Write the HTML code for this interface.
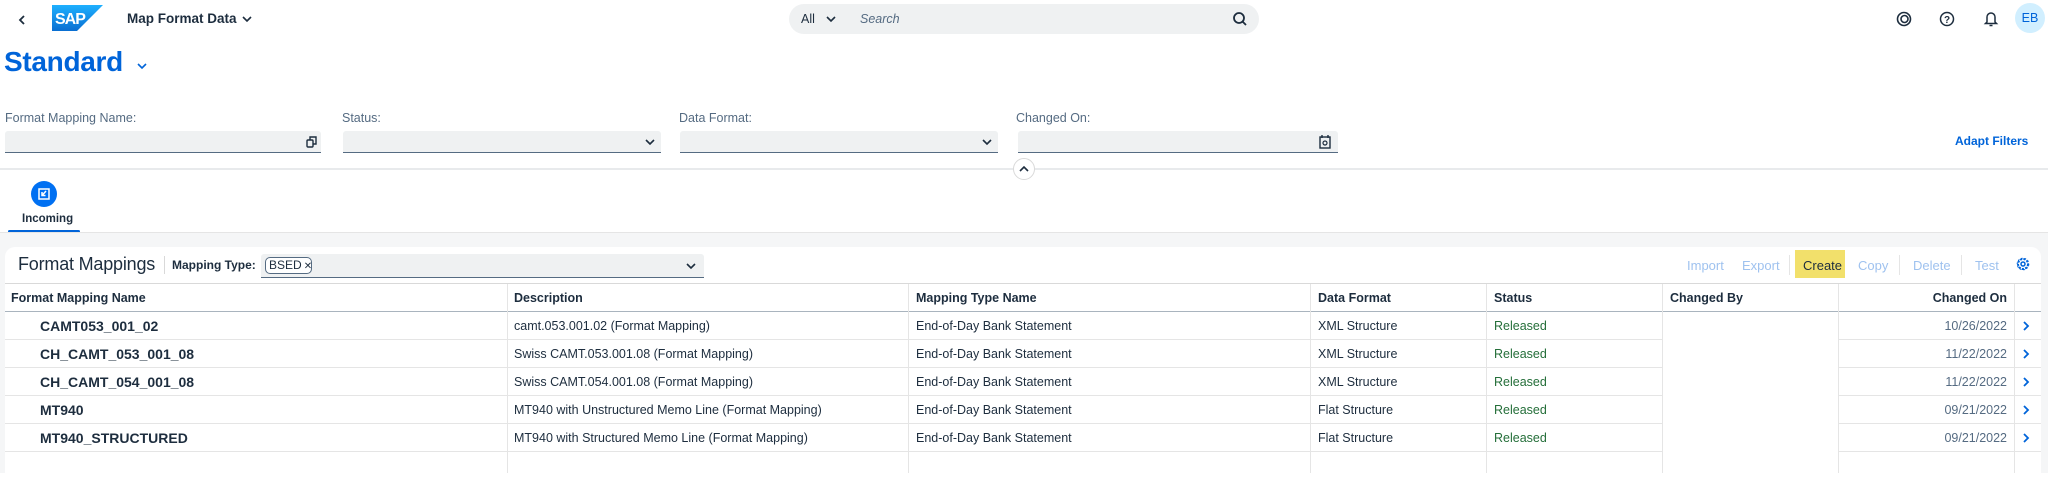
<!DOCTYPE html>
<html><head><meta charset="utf-8"><style>
*{box-sizing:border-box;margin:0;padding:0}
body{width:2048px;height:473px;overflow:hidden;background:#fff;font-family:"Liberation Sans",sans-serif;color:#1d2d3e;position:relative}
.a{position:absolute;white-space:nowrap}
.lbl{font-size:12.5px;color:#556b82}
.inp{position:absolute;height:22px;background:#eff1f2;border-bottom:1px solid #556b82;border-radius:3px 3px 0 0}
.hd{font-size:12.5px;font-weight:bold;color:#1d2d3e}
.c{font-size:12.5px;color:#1d2d3e}
.nm{font-size:14px;font-weight:bold;color:#1d2d3e}
.rel{font-size:12.5px;color:#256f3a}
.hl{position:absolute;height:1px;background:#e5e5e5}
.vl{position:absolute;width:1px;background:#e5e5e5}
.tb{font-size:13px;color:#9fc2ef}
</style></head><body>
<svg class="a" style="left:17px;top:14px" width="10" height="12" viewBox="0 0 10 12"><path d="M7 2 L3 6 L7 10" stroke="#1d2d3e" stroke-width="1.8" fill="none"/></svg>
<svg class="a" style="left:52px;top:5px" width="51" height="26" viewBox="0 0 51 26"><defs><linearGradient id="g" x1="0" y1="0" x2="0" y2="1"><stop offset="0" stop-color="#1eb0ff"/><stop offset="1" stop-color="#0a6ed1"/></linearGradient></defs><path d="M0 0H51L25 26H0Z" fill="url(#g)"/><text x="3" y="19" font-family="Liberation Sans" font-weight="bold" font-size="16" fill="#fff" letter-spacing="-1">SAP</text></svg>
<div class="a" style="left:127px;top:11px;font-size:13.5px;font-weight:bold;color:#1d2d3e">Map Format Data</div>
<svg class="a" style="left:242px;top:15px" width="10" height="8"><path d="M1 2 L5 6 L9 2" stroke="#1d2d3e" stroke-width="1.6" fill="none"/></svg>
<div class="a" style="left:789px;top:4px;width:470px;height:30px;border-radius:15px;background:#eff1f2"></div>
<div class="a" style="left:801px;top:12px;font-size:12.5px;color:#1d2d3e">All</div>
<svg class="a" style="left:826px;top:15px" width="10" height="8"><path d="M1 2 L5 6 L9 2" stroke="#1d2d3e" stroke-width="1.6" fill="none"/></svg>
<div class="a" style="left:860px;top:12px;font-size:12.5px;font-style:italic;color:#556b82">Search</div>
<svg class="a" style="left:1232px;top:11px" width="16" height="16"><circle cx="7" cy="7" r="5" stroke="#1d2d3e" stroke-width="1.8" fill="none"/><path d="M10.5 10.5 L14 14" stroke="#1d2d3e" stroke-width="1.8"/></svg>
<svg class="a" style="left:1896px;top:11px" width="16" height="16"><circle cx="8" cy="8" r="6.5" stroke="#1d2d3e" stroke-width="1.6" fill="none"/><circle cx="8.5" cy="8" r="3.5" stroke="#1d2d3e" stroke-width="1.6" fill="none"/></svg>
<svg class="a" style="left:1939px;top:11px" width="16" height="16"><circle cx="8" cy="8" r="6.5" stroke="#1d2d3e" stroke-width="1.5" fill="none"/><text x="8" y="12" text-anchor="middle" font-family="Liberation Sans" font-weight="bold" font-size="10" fill="#1d2d3e">?</text></svg>
<svg class="a" style="left:1983px;top:10px" width="16" height="18"><path d="M4 12 V7 a4 4 0 0 1 8 0 V12 L13.5 13.5 H2.5 Z" stroke="#1d2d3e" stroke-width="1.5" fill="none"/><path d="M6.5 15.5 H9.5" stroke="#1d2d3e" stroke-width="1.5"/></svg>
<div class="a" style="left:2015px;top:3px;width:30px;height:30px;border-radius:50%;background:#d1efff;color:#0064d9;font-size:12.5px;text-align:center;line-height:30px">EB</div>
<div class="a" style="left:4px;top:46px;font-size:28px;font-weight:bold;color:#0064d9;letter-spacing:-0.3px">Standard</div>
<svg class="a" style="left:137px;top:62px" width="10" height="8"><path d="M1 2 L5 6 L9 2" stroke="#0064d9" stroke-width="1.6" fill="none"/></svg>
<div class="a lbl" style="left:5px;top:111px">Format Mapping Name:</div>
<div class="a lbl" style="left:342px;top:111px">Status:</div>
<div class="a lbl" style="left:679px;top:111px">Data Format:</div>
<div class="a lbl" style="left:1016px;top:111px">Changed On:</div>
<div class="inp" style="left:5px;top:131px;width:316px"></div>
<div class="inp" style="left:343px;top:131px;width:318px"></div>
<div class="inp" style="left:680px;top:131px;width:318px"></div>
<div class="inp" style="left:1018px;top:131px;width:320px"></div>
<svg class="a" style="left:305px;top:135px" width="14" height="14"><rect x="2" y="5" width="6" height="7" rx="1" stroke="#1d2d3e" stroke-width="1.4" fill="none"/><path d="M5 5 V2 H11 V9 H8" stroke="#1d2d3e" stroke-width="1.4" fill="none"/></svg>
<svg class="a" style="left:645px;top:138px" width="10" height="8"><path d="M1 2 L5 6 L9 2" stroke="#1d2d3e" stroke-width="1.6" fill="none"/></svg>
<svg class="a" style="left:982px;top:138px" width="10" height="8"><path d="M1 2 L5 6 L9 2" stroke="#1d2d3e" stroke-width="1.6" fill="none"/></svg>
<svg class="a" style="left:1318px;top:134px" width="14" height="16"><rect x="2" y="3" width="10" height="11" stroke="#1d2d3e" stroke-width="1.4" fill="none"/><path d="M4 1 V4 M10 1 V4" stroke="#1d2d3e" stroke-width="1.4"/><circle cx="7" cy="9" r="2" stroke="#1d2d3e" stroke-width="1.2" fill="none"/></svg>
<div class="a" style="left:1955px;top:134px;font-size:12px;font-weight:bold;color:#0064d9">Adapt Filters</div>
<div class="a" style="left:0;top:168px;width:2048px;height:2px;background:#e8eaec"></div>
<div class="a" style="left:1013px;top:158px;width:22px;height:22px;border-radius:50%;background:#fff;border:1px solid #d9d9d9"></div>
<svg class="a" style="left:1019px;top:165px" width="10" height="8"><path d="M1 6 L5 2 L9 6" stroke="#1d2d3e" stroke-width="1.6" fill="none"/></svg>
<div class="a" style="left:31px;top:181px;width:26px;height:26px;border-radius:50%;background:#0070f2"></div>
<svg class="a" style="left:37px;top:187px" width="14" height="14"><rect x="2" y="2" width="10" height="10" stroke="#fff" stroke-width="1.5" fill="none"/><path d="M9 4 L5.5 8 M5 5 V8.5 H8.5" stroke="#fff" stroke-width="1.5" fill="none"/></svg>
<div class="a" style="left:22px;top:213px;font-size:11.5px;font-weight:bold;color:#1d2d3e">Incoming</div>
<div class="a" style="left:8px;top:230px;width:72px;height:3px;background:#0064d9;border-radius:2px"></div>
<div class="a" style="left:0;top:232px;width:2048px;height:241px;background:#f5f6f7;border-top:1px solid #e5e5e5"></div>
<div class="a" style="left:5px;top:247px;width:2036px;height:230px;background:#fff;border-radius:10px 10px 0 0"></div>
<div class="a" style="left:18px;top:254px;font-size:18px;color:#1d2d3e;letter-spacing:-0.2px">Format Mappings</div>
<div class="vl" style="left:164px;top:256px;height:18px;background:#d9d9d9"></div>
<div class="a" style="left:172px;top:258px;font-size:12px;font-weight:bold;color:#1d2d3e">Mapping Type:</div>
<div class="inp" style="left:261px;top:254px;width:443px;height:24px"></div>
<div class="a" style="left:265px;top:257px;width:47px;height:17px;border:1px solid #556b82;border-radius:5px;background:#fff;font-size:12px;line-height:15px;padding-left:3px">BSED<span style="font-size:10px;margin-left:2px">✕</span></div>
<svg class="a" style="left:686px;top:262px" width="10" height="8"><path d="M1 2 L5 6 L9 2" stroke="#1d2d3e" stroke-width="1.6" fill="none"/></svg>
<div class="a tb" style="left:1687px;top:258px">Import</div>
<div class="a tb" style="left:1742px;top:258px">Export</div>
<div class="vl" style="left:1789px;top:255px;height:20px"></div>
<div class="a" style="left:1795px;top:250px;width:50px;height:28px;background:#f2e06b"></div>
<div class="a" style="left:1803px;top:258px;font-size:13px;color:#1d2d3e">Create</div>
<div class="a tb" style="left:1858px;top:258px">Copy</div>
<div class="vl" style="left:1899px;top:255px;height:20px"></div>
<div class="a tb" style="left:1913px;top:258px">Delete</div>
<div class="vl" style="left:1961px;top:255px;height:20px"></div>
<div class="a tb" style="left:1975px;top:258px">Test</div>
<svg class="a" style="left:2015px;top:256px" width="16" height="16"><circle cx="8" cy="8" r="5" stroke="#0064d9" stroke-width="2" fill="none" stroke-dasharray="2.2 1.2"/><circle cx="8" cy="8" r="5.8" stroke="#0064d9" stroke-width="1" fill="none" stroke-dasharray="1.6 2"/><circle cx="8" cy="8" r="2" stroke="#0064d9" stroke-width="1.5" fill="none"/></svg>
<div class="hl" style="left:5px;top:283px;width:2036px;background:#d9d9d9"></div>
<div class="hl" style="left:5px;top:311px;width:2036px;background:#a9b4be"></div>
<div class="hl" style="left:5px;top:339px;width:1657px"></div><div class="hl" style="left:1838px;top:339px;width:203px"></div>
<div class="hl" style="left:5px;top:367px;width:1657px"></div><div class="hl" style="left:1838px;top:367px;width:203px"></div>
<div class="hl" style="left:5px;top:395px;width:1657px"></div><div class="hl" style="left:1838px;top:395px;width:203px"></div>
<div class="hl" style="left:5px;top:423px;width:1657px"></div><div class="hl" style="left:1838px;top:423px;width:203px"></div>
<div class="hl" style="left:5px;top:451px;width:1657px"></div><div class="hl" style="left:1838px;top:451px;width:203px"></div>
<div class="vl" style="left:507px;top:284px;height:189px"></div>
<div class="vl" style="left:908px;top:284px;height:189px"></div>
<div class="vl" style="left:1310px;top:284px;height:189px"></div>
<div class="vl" style="left:1486px;top:284px;height:189px"></div>
<div class="vl" style="left:1662px;top:284px;height:189px"></div>
<div class="vl" style="left:1838px;top:284px;height:189px"></div>
<div class="vl" style="left:2014px;top:284px;height:189px"></div>
<div class="a hd" style="left:11px;top:291px">Format Mapping Name</div>
<div class="a hd" style="left:514px;top:291px">Description</div>
<div class="a hd" style="left:916px;top:291px">Mapping Type Name</div>
<div class="a hd" style="left:1318px;top:291px">Data Format</div>
<div class="a hd" style="left:1494px;top:291px">Status</div>
<div class="a hd" style="left:1670px;top:291px">Changed By</div>
<div class="a hd" style="right:41px;top:291px">Changed On</div>

<div class="a nm" style="left:40px;top:318px">CAMT053_001_02</div>
<div class="a c" style="left:514px;top:319px">camt.053.001.02 (Format Mapping)</div>
<div class="a c" style="left:916px;top:319px">End-of-Day Bank Statement</div>
<div class="a c" style="left:1318px;top:319px">XML Structure</div>
<div class="a rel" style="left:1494px;top:319px">Released</div>
<div class="a c" style="right:41px;top:319px;color:#556b82">10/26/2022</div>

<div class="a nm" style="left:40px;top:346px">CH_CAMT_053_001_08</div>
<div class="a c" style="left:514px;top:347px">Swiss CAMT.053.001.08 (Format Mapping)</div>
<div class="a c" style="left:916px;top:347px">End-of-Day Bank Statement</div>
<div class="a c" style="left:1318px;top:347px">XML Structure</div>
<div class="a rel" style="left:1494px;top:347px">Released</div>
<div class="a c" style="right:41px;top:347px;color:#556b82">11/22/2022</div>

<div class="a nm" style="left:40px;top:374px">CH_CAMT_054_001_08</div>
<div class="a c" style="left:514px;top:375px">Swiss CAMT.054.001.08 (Format Mapping)</div>
<div class="a c" style="left:916px;top:375px">End-of-Day Bank Statement</div>
<div class="a c" style="left:1318px;top:375px">XML Structure</div>
<div class="a rel" style="left:1494px;top:375px">Released</div>
<div class="a c" style="right:41px;top:375px;color:#556b82">11/22/2022</div>

<div class="a nm" style="left:40px;top:402px">MT940</div>
<div class="a c" style="left:514px;top:403px">MT940 with Unstructured Memo Line (Format Mapping)</div>
<div class="a c" style="left:916px;top:403px">End-of-Day Bank Statement</div>
<div class="a c" style="left:1318px;top:403px">Flat Structure</div>
<div class="a rel" style="left:1494px;top:403px">Released</div>
<div class="a c" style="right:41px;top:403px;color:#556b82">09/21/2022</div>

<div class="a nm" style="left:40px;top:430px">MT940_STRUCTURED</div>
<div class="a c" style="left:514px;top:431px">MT940 with Structured Memo Line (Format Mapping)</div>
<div class="a c" style="left:916px;top:431px">End-of-Day Bank Statement</div>
<div class="a c" style="left:1318px;top:431px">Flat Structure</div>
<div class="a rel" style="left:1494px;top:431px">Released</div>
<div class="a c" style="right:41px;top:431px;color:#556b82">09/21/2022</div>

<svg class="a" style="left:2022px;top:321px" width="8" height="10"><path d="M2 1 L6 5 L2 9" stroke="#0064d9" stroke-width="1.8" fill="none"/></svg>
<svg class="a" style="left:2022px;top:349px" width="8" height="10"><path d="M2 1 L6 5 L2 9" stroke="#0064d9" stroke-width="1.8" fill="none"/></svg>
<svg class="a" style="left:2022px;top:377px" width="8" height="10"><path d="M2 1 L6 5 L2 9" stroke="#0064d9" stroke-width="1.8" fill="none"/></svg>
<svg class="a" style="left:2022px;top:405px" width="8" height="10"><path d="M2 1 L6 5 L2 9" stroke="#0064d9" stroke-width="1.8" fill="none"/></svg>
<svg class="a" style="left:2022px;top:433px" width="8" height="10"><path d="M2 1 L6 5 L2 9" stroke="#0064d9" stroke-width="1.8" fill="none"/></svg>
</body></html>
